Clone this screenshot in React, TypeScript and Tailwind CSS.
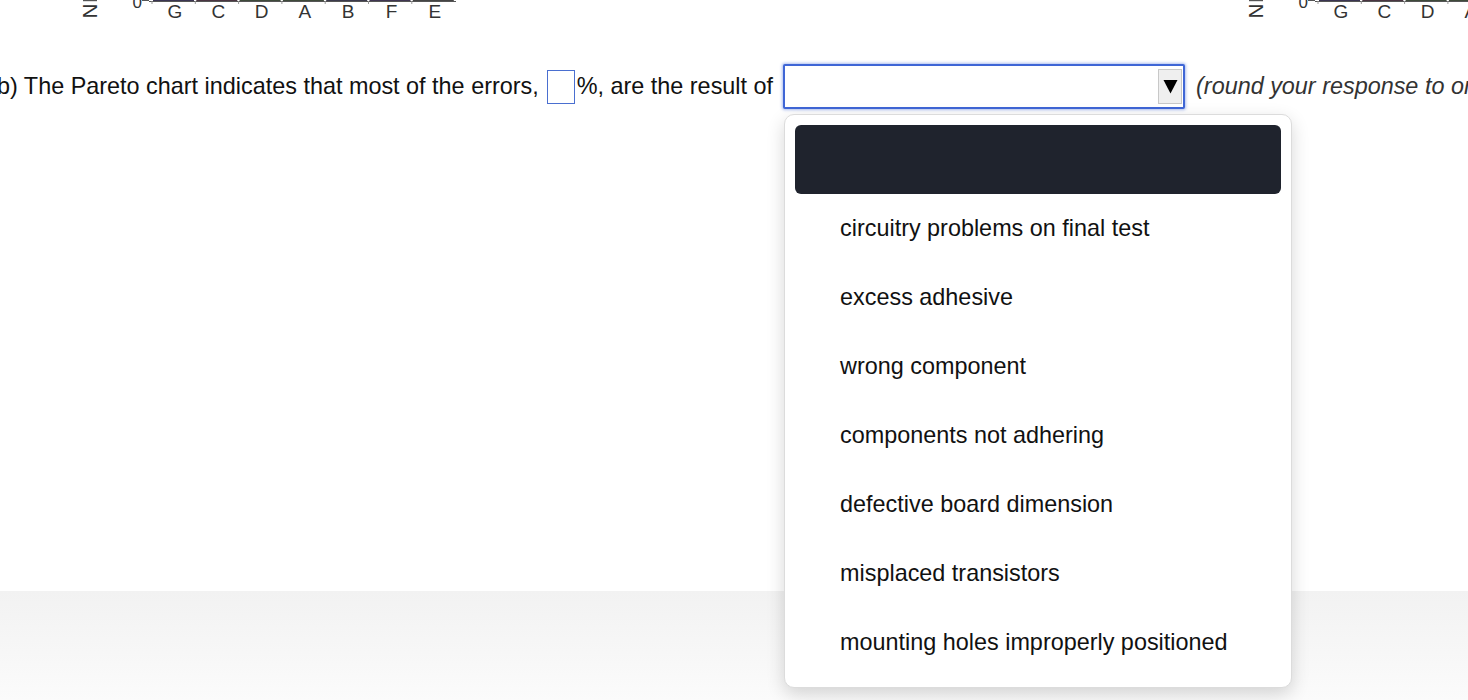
import React from "react";

const letters = ["G", "C", "D", "A", "B", "F", "E"];
const barColors = ["#3b3552", "#4a3542", "#3e4a3b", "#3f4a3b", "#3c3a4c", "#403652", "#444444"];

function ChartStub({ dx }: { dx: number }) {
  return (
    <g transform={`translate(${dx},0)`}>
      <text
        x={97}
        y={18.5}
        transform="rotate(-90 97 18.5)"
        fontSize={20.5}
        fill="#333"
        fontFamily="'Liberation Sans', Arial, sans-serif"
      >
        N
      </text>
      <rect x={83} y={0} width={14} height={1.2} fill="#555" />
      <text x={142} y={8} fontSize={17} fill="#333" textAnchor="end" fontFamily="'Liberation Sans', Arial, sans-serif">
        0
      </text>
      <line x1={142} y1={0.5} x2={149} y2={0.5} stroke="#555" strokeWidth={1} />
      {letters.map((l, i) => (
        <rect key={"b" + l} x={153 + i * 43.3} y={0} width={41} height={1.5} fill={barColors[i]} />
      ))}
      <line x1={149} y1={1.5} x2={456} y2={1.5} stroke="#555" strokeWidth={1} />
      {letters.map((l, i) => (
        <line key={"t" + l} x1={152 + i * 43.3} y1={1} x2={152 + i * 43.3} y2={4} stroke="#999" strokeWidth={1} />
      ))}
      {letters.map((l, i) => (
        <text
          key={l}
          x={175 + i * 43.3}
          y={18}
          fontSize={19}
          fill="#333"
          textAnchor="middle"
          fontFamily="'Liberation Sans', Arial, sans-serif"
        >
          {l}
        </text>
      ))}
    </g>
  );
}

const options = [
  "circuitry problems on final test",
  "excess adhesive",
  "wrong component",
  "components not adhering",
  "defective board dimension",
  "misplaced transistors",
  "mounting holes improperly positioned",
];

export default function App() {
  return (
    <div
      className="relative flex h-[700px] w-[1468px] flex-col overflow-hidden bg-white text-[23.4px] text-[#111]"
      style={{ fontFamily: "'Liberation Sans', Arial, Helvetica, sans-serif" }}
    >
      <div className="h-[591px] shrink-0">
        <svg width={1468} height={24} className="block">
          <ChartStub dx={0} />
          <ChartStub dx={1166} />
        </svg>
        <div className="ml-[-3px] mt-[40px] flex h-[45px] items-center whitespace-nowrap">
          <span>b) The Pareto chart indicates that most of the errors,</span>
          <span className="ml-[8px] inline-block h-[34px] w-[28px] shrink-0 border border-[#4a6fd0] bg-white" />
          <span className="ml-[2px]">%, are the result of</span>
          <div className="relative ml-[10px] shrink-0">
            <div className="flex h-[45px] w-[402px] items-center justify-end rounded-[2px] border-2 border-[#3f66d6] bg-white pr-[1px] shadow-[0_0_3px_1px_rgba(70,110,220,0.45)]">
              <div className="flex h-[35px] w-[24px] items-center justify-center border border-[#c8c8c8] bg-[#efefef]">
                <svg width={15} height={15} viewBox="0 0 15 15">
                  <polygon points="0.5,1 14.5,1 7.5,14.5" fill="#000" />
                </svg>
              </div>
            </div>
            <div className="absolute left-[1px] top-[50px] z-10 w-[508px] rounded-[10px] border border-[#dcdcdc] bg-white p-[10px] shadow-[0_6px_18px_rgba(0,0,0,0.16)]">
              <div className="h-[69px] rounded-[6px] bg-[#1f232d]" />
              {options.map((o) => (
                <div key={o} className="flex h-[69px] items-center pl-[45px] text-[23.4px] text-[#111]">
                  {o}
                </div>
              ))}
            </div>
          </div>
          <span className="ml-[11px] italic text-[#333]">(round your response to one decimal place).</span>
        </div>
      </div>
      <div className="flex-1 bg-gradient-to-b from-[#f2f2f2] to-[#fbfbfb]" />
    </div>
  );
}
